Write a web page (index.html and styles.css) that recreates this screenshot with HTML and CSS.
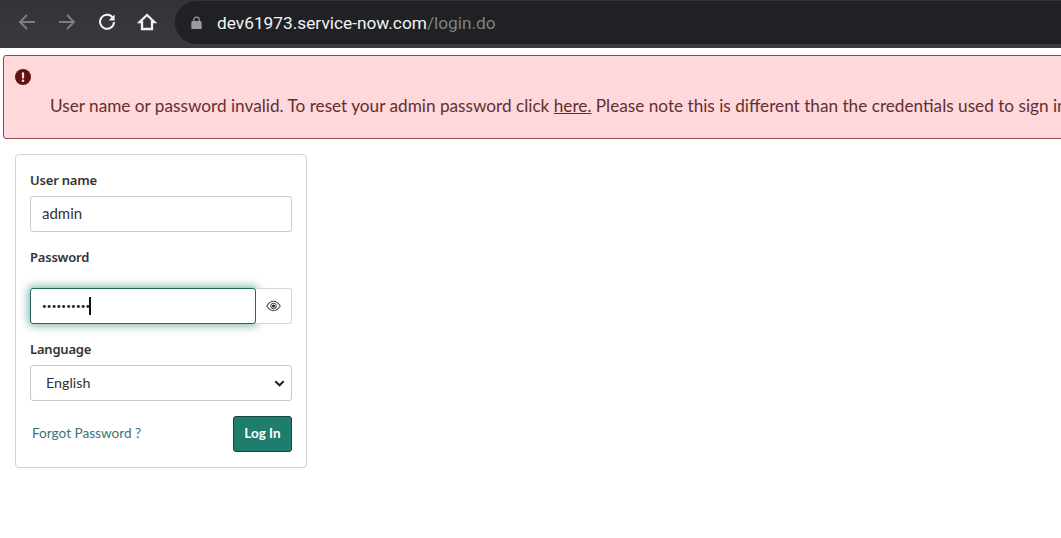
FILE: index.html
```html
<!DOCTYPE html>
<html lang="en">
  <head>
    <meta name="viewport" content="width=device-width" />
    <title>Instance Login</title>
    <link rel="stylesheet" href="styles.css">
  </head>
  <body>
    <header class="toolbar">
      <svg class="nav-icon dim" viewBox="0 0 20 20"><path d="M18 10H3M10 3l-7 7 7 7" /></svg>
      <svg class="nav-icon dim" viewBox="0 0 20 20"><path d="M2 10h15M10 3l7 7-7 7" /></svg>
      <svg class="nav-icon" viewBox="0 0 20 20"><path d="M16 6.200A7 7 0 1 0 17 10" /><path class="solid" d="M17.600 2.400v6h-6z" /></svg>
      <svg class="nav-icon heavy" viewBox="0 0 20 20"><path d="M10 3L2.600 10H5v7h10v-7h2.400z" /></svg>
      <div class="omnibox">
        <svg class="lock" viewBox="0 0 12 14"><path d="M3 6V4.200a3 3 0 0 1 6 0V6" /><rect x="1" y="6" width="10" height="8" rx="1" /></svg>
        <span class="url">dev61973.service-now.com<span class="url-path">/login.do</span></span>
      </div>
    </header>

    <main>
      <div class="alert">
        <svg class="alert-icon" viewBox="0 0 16 16">
          <circle cx="8" cy="8" r="8" fill="#5f1414" />
          <rect x="6.900" y="3.200" width="2.200" height="6.200" rx="1" fill="#fdd" />
          <circle cx="8" cy="11.800" r="1.300" fill="#fdd" />
        </svg>
        <p class="alert-text">User name or password invalid. To reset your admin password click <a href="#">here.</a> Please note this is different than the credentials used to sign in</p>
      </div>

      <form class="login-card">
        <label class="field-label" for="username">User name</label>
        <input class="text-input" id="username" type="text" value="admin">

        <label class="field-label password-label" for="password">Password</label>
        <div class="password-row">
          <div class="text-input focused" id="password"><span class="dots">••••••••••</span><span class="caret"></span></div>
          <button class="reveal" type="button" aria-label="Show password">
            <svg viewBox="0 0 16 12" width="15" height="12">
              <path d="M.8 6C3 2.600 5.400 1 8 1s5 1.600 7.200 5C13 9.400 10.600 11 8 11S3 9.400.8 6z" fill="none" stroke="#444" stroke-width="1.100" />
              <circle cx="8" cy="6" r="3" fill="none" stroke="#333" stroke-width="1" />
              <circle cx="8" cy="6" r="1.700" fill="#222" />
            </svg>
          </button>
        </div>

        <label class="field-label language-label" for="language">Language</label>
        <div class="select-box" id="language">
          <span class="select-value">English</span>
          <svg viewBox="0 0 12 8" width="11" height="7"><path d="M1.200 1.500L6 6l4.800-4.500" fill="none" stroke="#222" stroke-width="2.300" /></svg>
        </div>

        <div class="actions">
          <a class="forgot" href="#">Forgot Password ?</a>
          <button class="login-btn" type="button">Log In</button>
        </div>
      </form>
    </main>
  </body>
</html>
```

FILE: styles.css
```css
html, body {
  margin: 0;
  height: 100%;
  overflow: hidden;
  background: #fff;
}

body {
  font-family: "Lato", "Open Sans", sans-serif;
  color: #2e2e2e;
}

/* browser chrome */
.toolbar {
  display: flex;
  align-items: center;
  height: 44px;
  padding: 0 0 4px 17px;
  background: linear-gradient(#323337, #3a3b3f);
}

.nav-icon {
  width: 20px;
  height: 20px;
  margin-right: 20px;
  fill: none;
  stroke: #f1f3f4;
  stroke-width: 2;
}

.nav-icon.dim {
  stroke: #7b7d80;
}

.nav-icon.heavy {
  stroke-width: 2.300;
}

.nav-icon .solid {
  fill: #f1f3f4;
  stroke: none;
}

.omnibox {
  display: flex;
  align-items: center;
  flex: 1;
  height: 43px;
  margin: 1px 0 0 -2px;
  padding-left: 16px;
  background: #202124;
  border-radius: 22px 0 0 22px;
}

.lock {
  width: 11px;
  height: 13px;
  fill: #9a9b9e;
  stroke: #9a9b9e;
  stroke-width: 1.300;
}

.lock path {
  fill: none;
}

.url {
  margin-left: 15px;
  font-family: "Roboto", sans-serif;
  font-size: 17.300px;
  color: #f1f3f4;
  white-space: nowrap;
}

.url-path {
  color: #7f8184;
}

/* error banner */
.alert {
  box-sizing: border-box;
  width: 1200px;
  height: 84px;
  margin: 7px 0 15px 3px;
  padding: 13px 0 0 11px;
  background: #ffd8db;
  border: 1px solid #8f4a4c;
  border-radius: 3px;
}

.alert-icon {
  display: block;
  width: 16px;
  height: 16px;
}

.alert-text {
  margin: 10px 0 0 35px;
  font-size: 17.200px;
  line-height: 22px;
  color: #622f31;
  white-space: nowrap;
}

.alert-text a {
  color: inherit;
}

/* login form */
.login-card {
  width: 262px;
  height: 283px;
  margin-left: 15px;
  padding: 15px 14px 14px;
  background: #fff;
  border: 1px solid #d3d3d3;
  border-radius: 4px;
}

.field-label {
  display: block;
  height: 20px;
  font-family: "Noto Sans", sans-serif;
  font-size: 13px;
  font-weight: 600;
  letter-spacing: -0.2px;
  line-height: 20px;
  color: #333;
}

.text-input {
  display: block;
  box-sizing: border-box;
  width: 100%;
  height: 36px;
  margin-top: 6px;
  padding: 0 11px 2px;
  font: 15px "Lato", sans-serif;
  color: #333;
  background: #fff;
  border: 1px solid #c9c9c9;
  border-radius: 3px;
}

.password-label {
  margin-top: 15px;
}

.password-row {
  display: flex;
  margin-top: 21px;
}

.focused {
  display: flex;
  align-items: center;
  flex: none;
  width: 226px;
  margin-top: 0;
  padding-bottom: 0;
  border-color: #24695f;
  box-shadow: 0 0 8px 2px rgba(32, 128, 112, 0.55);
}

.dots {
  font-size: 8px;
  letter-spacing: 0.2px;
  color: #222;
}

.caret {
  width: 2px;
  height: 18px;
  margin-left: -1px;
  background: #111;
}

.reveal {
  display: flex;
  align-items: center;
  justify-content: center;
  flex: 1;
  padding: 0;
  background: #fff;
  border: 1px solid #d5d5d5;
  border-left: none;
  border-radius: 0 3px 3px 0;
}

.language-label {
  margin-top: 15px;
}

.select-box {
  display: flex;
  align-items: center;
  justify-content: space-between;
  box-sizing: border-box;
  height: 36px;
  margin-top: 6px;
  padding: 0 6px 0 15px;
  font-size: 14.300px;
  color: #333;
  border: 1px solid #c9c9c9;
  border-radius: 3px;
}

.select-value {
  padding-bottom: 2px;
}

.actions {
  display: flex;
  align-items: center;
  justify-content: space-between;
  margin-top: 15px;
  padding-left: 2px;
}

.forgot {
  padding-bottom: 2px;
  font-size: 13.600px;
  color: #3a7570;
  text-decoration: none;
}

.login-btn {
  width: 59px;
  height: 36px;
  padding: 0 0 2px;
  font: 700 13.500px "Lato", sans-serif;
  color: #fff;
  background: #1f7d6d;
  border: 1px solid #17453e;
  border-radius: 3px;
}
```
